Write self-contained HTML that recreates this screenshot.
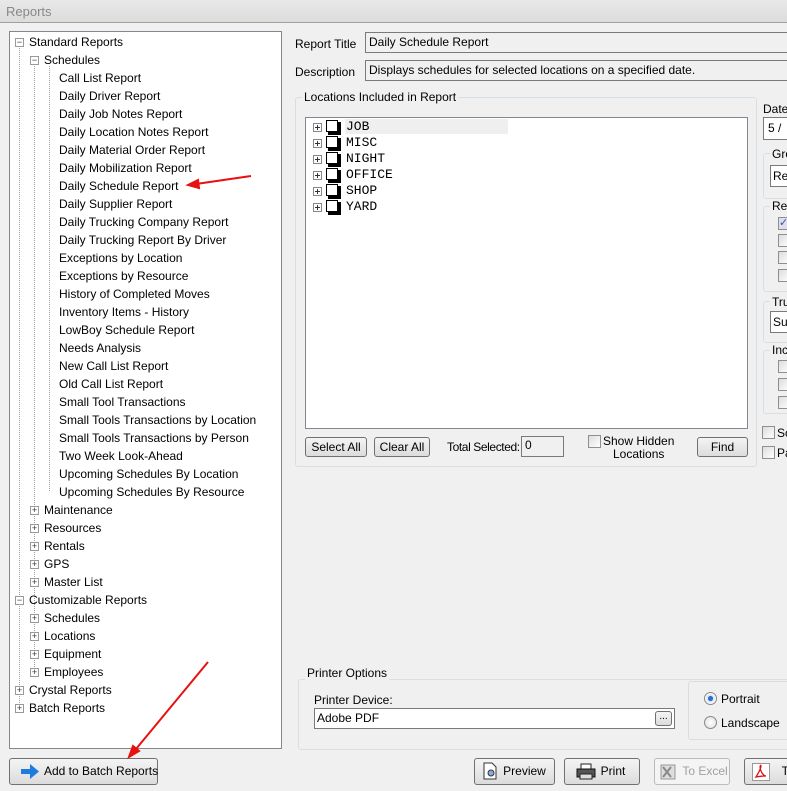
<!DOCTYPE html>
<html><head><style>
*{box-sizing:border-box;margin:0;padding:0}
body{width:787px;height:791px;background:#f0f0f0;font:12px "Liberation Sans",sans-serif;color:#000;position:relative;overflow:hidden}
.a{position:absolute;white-space:nowrap}
.title{left:0;top:0;width:787px;height:23px;background:linear-gradient(#e8e8e8,#dcdcdc);border-bottom:1px solid #a0a0a0;color:#888;padding:4px 6px;font-size:13px}
.tree{left:9px;top:31px;width:273px;height:718px;background:#fff;border:1px solid #828790}
.t{position:absolute;line-height:18px;height:18px}
.pm{position:absolute;width:9px;height:9px;border:1px solid #999;background:#fff;font-size:9px;line-height:7px;text-align:center;color:#333}
.in{background:#f0f0f0;border:1px solid #7a7a7a;padding:2px 3px;height:21px}
.gb{border:1px solid #d5dfe5;border-radius:3px}
.gl{background:#f0f0f0;padding:0 2px}
.btn{border:1px solid #707070;border-radius:3px;background:linear-gradient(#f4f4f4,#dcdcdc);text-align:center;line-height:18px}
.cb{width:13px;height:13px;border:1px solid #8e8f8f;background:linear-gradient(135deg,#ddd,#fff)}
.mono{font-family:"Liberation Mono",monospace;font-size:13px}
</style></head><body>
<div class="a title">Reports</div>
<div class="a tree">
<svg class="a" style="left:0;top:0" width="273" height="718"><g stroke="#a0a0a0" stroke-dasharray="1,1">
<line x1="9.5" y1="16" x2="9.5" y2="676"/><line x1="24.5" y1="34" x2="24.5" y2="640"/><line x1="39.5" y1="34" x2="39.5" y2="460"/><line x1="24.5" y1="586" x2="24.5" y2="640"/></g></svg>
<div class="pm" style="left:5px;top:6px">−</div><div class="t" style="left:19px;top:1px">Standard Reports</div>
<div class="pm" style="left:20px;top:24px">−</div><div class="t" style="left:34px;top:19px">Schedules</div>
<div style="position:absolute;left:49px;top:37px;line-height:18px">Call List Report<br>Daily Driver Report<br>Daily Job Notes Report<br>Daily Location Notes Report<br>Daily Material Order Report<br>Daily Mobilization Report<br>Daily Schedule Report<br>Daily Supplier Report<br>Daily Trucking Company Report<br>Daily Trucking Report By Driver<br>Exceptions by Location<br>Exceptions by Resource<br>History of Completed Moves<br>Inventory Items - History<br>LowBoy Schedule Report<br>Needs Analysis<br>New Call List Report<br>Old Call List Report<br>Small Tool Transactions<br>Small Tools Transactions by Location<br>Small Tools Transactions by Person<br>Two Week Look-Ahead<br>Upcoming Schedules By Location<br>Upcoming Schedules By Resource</div>
<div class="pm" style="left:20px;top:474px">+</div><div class="t" style="left:34px;top:469px">Maintenance</div>
<div class="pm" style="left:20px;top:492px">+</div><div class="t" style="left:34px;top:487px">Resources</div>
<div class="pm" style="left:20px;top:510px">+</div><div class="t" style="left:34px;top:505px">Rentals</div>
<div class="pm" style="left:20px;top:528px">+</div><div class="t" style="left:34px;top:523px">GPS</div>
<div class="pm" style="left:20px;top:546px">+</div><div class="t" style="left:34px;top:541px">Master List</div>
<div class="pm" style="left:5px;top:564px">−</div><div class="t" style="left:19px;top:559px">Customizable Reports</div>
<div class="pm" style="left:20px;top:582px">+</div><div class="t" style="left:34px;top:577px">Schedules</div>
<div class="pm" style="left:20px;top:600px">+</div><div class="t" style="left:34px;top:595px">Locations</div>
<div class="pm" style="left:20px;top:618px">+</div><div class="t" style="left:34px;top:613px">Equipment</div>
<div class="pm" style="left:20px;top:636px">+</div><div class="t" style="left:34px;top:631px">Employees</div>
<div class="pm" style="left:5px;top:654px">+</div><div class="t" style="left:19px;top:649px">Crystal Reports</div>
<div class="pm" style="left:5px;top:672px">+</div><div class="t" style="left:19px;top:667px">Batch Reports</div>
</div>

<div class="a" style="left:295px;top:37px">Report Title</div>
<div class="a in" style="left:365px;top:32px;width:430px">Daily Schedule Report</div>
<div class="a" style="left:295px;top:65px">Description</div>
<div class="a in" style="left:365px;top:60px;width:430px">Displays schedules for selected locations on a specified date.</div>

<div class="a gb" style="left:295px;top:97px;width:462px;height:370px"></div>
<div class="a gl" style="left:302px;top:90px">Locations Included in Report</div>
<div class="a" style="left:305px;top:117px;width:443px;height:312px;background:#fff;border:1px solid #828790"></div>
<div class="a" style="left:345px;top:119px;width:163px;height:15px;background:#efefef"></div>
<div class="a" style="left:312px;top:119px">
<div class="mono" style="position:relative;line-height:16px;padding-left:34px">JOB<br>MISC<br>NIGHT<br>OFFICE<br>SHOP<br>YARD</div>
</div>
<svg class="a" style="left:312px;top:118px" width="34" height="100">
<g fill="#fff" stroke="#888"><rect x="1.5" y="5.5" width="8" height="8"/><rect x="1.5" y="21.5" width="8" height="8"/><rect x="1.5" y="37.5" width="8" height="8"/><rect x="1.5" y="53.5" width="8" height="8"/><rect x="1.5" y="69.5" width="8" height="8"/><rect x="1.5" y="85.5" width="8" height="8"/></g>
<g stroke="#333"><path d="M3 9.5h5M5.5 7v5M3 25.5h5M5.5 23v5M3 41.5h5M5.5 39v5M3 57.5h5M5.5 55v5M3 73.5h5M5.5 71v5M3 89.5h5M5.5 87v5"/></g>
<g fill="#000"><rect x="16" y="4" width="13" height="13"/><rect x="16" y="20" width="13" height="13"/><rect x="16" y="36" width="13" height="13"/><rect x="16" y="52" width="13" height="13"/><rect x="16" y="68" width="13" height="13"/><rect x="16" y="84" width="13" height="13"/></g>
<g fill="#fff" stroke="#000"><rect x="14.5" y="2.5" width="11" height="11"/><rect x="14.5" y="18.5" width="11" height="11"/><rect x="14.5" y="34.5" width="11" height="11"/><rect x="14.5" y="50.5" width="11" height="11"/><rect x="14.5" y="66.5" width="11" height="11"/><rect x="14.5" y="82.5" width="11" height="11"/></g>
</svg>
<div class="a btn" style="left:305px;top:437px;width:62px;height:20px">Select All</div>
<div class="a btn" style="left:374px;top:437px;width:56px;height:20px">Clear All</div>
<div class="a" style="left:447px;top:440px;letter-spacing:-0.4px">Total Selected:</div>
<div class="a in" style="left:521px;top:436px;width:43px;height:21px;padding:1px 3px">0</div>
<div class="a cb" style="left:588px;top:435px"></div>
<div class="a" style="left:603px;top:435px;line-height:13px;text-align:center">Show Hidden<br>Locations</div>
<div class="a btn" style="left:697px;top:437px;width:51px;height:20px">Find</div>

<div class="a" style="left:763px;top:102px">Date</div>
<div class="a" style="left:763px;top:117px;width:30px;height:23px;background:#fff;border:1px solid #7a7a7a;padding:3px 4px">5 /</div>
<div class="a gb" style="left:763px;top:153px;width:40px;height:46px"></div><div class="a gl" style="left:770px;top:147px">Gro</div>
<div class="a" style="left:770px;top:165px;width:30px;height:22px;background:#fff;border:1px solid #7a7a7a;padding:3px 2px">Re</div>
<div class="a gb" style="left:763px;top:206px;width:40px;height:86px"></div><div class="a gl" style="left:770px;top:199px">Re</div>
<div class="a cb" style="left:778px;top:217px;background:#dde;color:#35a;font-size:11px;line-height:10px">✓</div>
<div class="a cb" style="left:778px;top:234px"></div><div class="a cb" style="left:778px;top:251px"></div><div class="a cb" style="left:778px;top:269px"></div>
<div class="a gb" style="left:763px;top:301px;width:40px;height:42px"></div><div class="a gl" style="left:770px;top:295px">Tru</div>
<div class="a" style="left:770px;top:311px;width:30px;height:22px;background:#fff;border:1px solid #7a7a7a;padding:3px 2px">Su</div>
<div class="a gb" style="left:763px;top:350px;width:40px;height:64px"></div><div class="a gl" style="left:770px;top:343px">Inc</div>
<div class="a cb" style="left:778px;top:360px"></div><div class="a cb" style="left:778px;top:378px"></div><div class="a cb" style="left:778px;top:396px"></div>
<div class="a cb" style="left:762px;top:426px"></div><div class="a" style="left:777px;top:426px">Sc</div>
<div class="a cb" style="left:762px;top:446px"></div><div class="a" style="left:777px;top:446px">Pa</div>

<div class="a gb" style="left:298px;top:679px;width:500px;height:71px"></div>
<div class="a gl" style="left:305px;top:666px">Printer Options</div>
<div class="a" style="left:314px;top:693px">Printer Device:</div>
<div class="a" style="left:314px;top:708px;width:361px;height:21px;background:#fff;border:1px solid #7a7a7a;padding:2px 2px">Adobe PDF</div>
<div class="a btn" style="left:655px;top:711px;width:17px;height:15px;line-height:10px;font-size:10px">...</div>
<div class="a gb" style="left:688px;top:681px;width:110px;height:59px;border-color:#dcdcdc"></div>
<div class="a" style="left:704px;top:692px;width:13px;height:13px;border-radius:50%;border:1px solid #888;background:radial-gradient(#2a6fc9 30%,#cfe0f5 35%,#fff 70%)"></div>
<div class="a" style="left:721px;top:692px">Portrait</div>
<div class="a" style="left:704px;top:716px;width:13px;height:13px;border-radius:50%;border:1px solid #888;background:radial-gradient(#fff,#ddd)"></div>
<div class="a" style="left:721px;top:716px">Landscape</div>

<div class="a btn" style="left:9px;top:758px;width:149px;height:27px;line-height:25px;padding-left:34px;text-align:left">Add to Batch Reports</div>
<svg class="a" style="left:19px;top:763px" width="22" height="17"><path d="M2 6h9V1l9 7.5-9 7.5v-5H2z" fill="#1e7be0"/></svg>
<div class="a btn" style="left:474px;top:758px;width:81px;height:27px;line-height:25px;padding-left:20px">Preview</div>
<svg class="a" style="left:482px;top:762px" width="16" height="18"><path d="M2 1h8l4 4v12H2z" fill="#fff" stroke="#333"/><circle cx="9" cy="11" r="3" fill="#8ad" stroke="#333"/></svg>
<div class="a btn" style="left:564px;top:758px;width:76px;height:27px;line-height:25px;padding-left:22px">Print</div>
<svg class="a" style="left:576px;top:763px" width="20" height="17"><rect x="5" y="1" width="10" height="6" fill="#fff" stroke="#222"/><rect x="1" y="6" width="18" height="8" fill="#555" stroke="#111"/><rect x="4" y="11" width="12" height="5" fill="#ddd" stroke="#222"/></svg>
<div class="a btn" style="left:654px;top:758px;width:76px;height:27px;line-height:25px;padding-left:26px;color:#a0a0a0;background:#f4f4f4;border-color:#bbb">To Excel</div>
<svg class="a" style="left:660px;top:764px" width="16" height="16"><rect x="1" y="1" width="14" height="14" fill="#ddd" stroke="#999"/><path d="M3 3l8 10M11 3l-8 10" stroke="#888" stroke-width="2"/></svg>
<div class="a btn" style="left:744px;top:758px;width:60px;height:27px;line-height:25px;padding-left:28px">To</div>
<svg class="a" style="left:752px;top:763px" width="18" height="18"><rect x="0.5" y="0.5" width="17" height="17" fill="#fff" stroke="#999"/><path d="M4 14C7 9 9 5 9 3s-2 0 0 5 5 5 5 5-6 0-10 1z" fill="none" stroke="#d11" stroke-width="1.3"/></svg>

<svg class="a" style="left:0;top:0" width="787" height="791"><g stroke="#e81010" stroke-width="2" fill="#e81010">
<line x1="251" y1="176" x2="196" y2="184"/><path d="M188 185l10-5 1 8z"/>
<line x1="208" y1="662" x2="136" y2="749"/><path d="M129 757l4-11 6 5z"/></g></svg>
</body></html>
